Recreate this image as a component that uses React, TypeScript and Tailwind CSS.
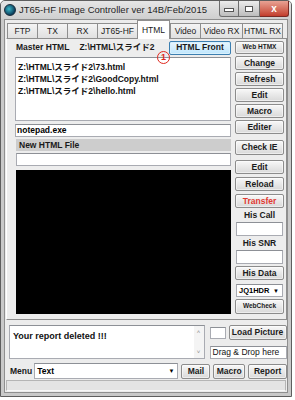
import React from "react";

const btn =
  "flex items-center justify-center border border-[#8c8c8c] rounded-[2px] bg-linear-to-b from-[#f8f8f8] to-[#d9d9d9] font-bold text-[#1c1c1c] leading-none shadow-[inset_0_0_0_1px_#ffffff80]";
const box = "bg-white border border-[#a9abb2] border-t-[#8d9096]";

function Tab({ label, w }: { label: string; w: string }) {
  return (
    <div
      className={`${w} h-[15px] flex items-center justify-center border border-[#8e8e8e] border-b-0 border-r-0 bg-linear-to-b from-[#f4f4f4] to-[#e0e0e0] text-[8.5px] text-[#1a1a1a] leading-none`}
    >
      {label}
    </div>
  );
}

export default function App() {
  return (
    <div className="w-[295px] h-[400px] bg-white overflow-hidden font-['Liberation_Sans','Noto_Sans_CJK_JP',sans-serif]">
      <div className="w-[292px] h-[397px] border border-[#5e5e5e] rounded-t-[5px] bg-[#c9c9c9] flex flex-col px-[3px] pb-[3px]">
        {/* title bar */}
        <div className="h-[18px] flex items-start -mx-[3px] bg-linear-to-b from-[#e6e6e6] to-[#cfcfcf] rounded-t-[4px]">
          <div className="mt-[3px] ml-[3px] w-[12px] h-[12px] rounded-full bg-[radial-gradient(circle_at_40%_40%,#3bb8c8,#0b3e5c_70%)] border border-[#1b2c3a]" />
          <div className="ml-[3px] mt-[4px] text-[9.5px] leading-none text-[#1f1f1f] whitespace-nowrap">
            JT65-HF Image Controller ver 14B/Feb/2015
          </div>
          <div className="ml-auto mr-[2px] flex">
            <div className="w-[20px] h-[16px] border border-[#6d6d6d] border-t-0 rounded-bl-[3px] bg-linear-to-b from-[#ececec] to-[#bdbdbd] flex items-end justify-center pb-[4px]">
              <div className="w-[8px] h-[2px] bg-white border border-[#555] box-content" />
            </div>
            <div className="w-[21px] h-[16px] border border-[#6d6d6d] border-t-0 border-l-0 bg-linear-to-b from-[#ececec] to-[#bdbdbd] flex items-center justify-center">
              <div className="w-[8px] h-[6px] border-[1.5px] border-[#555] bg-white" />
            </div>
            <div className="w-[29px] h-[16px] border border-[#7a2a24] border-t-0 border-l-0 rounded-br-[3px] bg-linear-to-b from-[#e8a294] to-[#c23c2c] flex items-center justify-center text-white font-bold text-[10px] leading-none">
              x
            </div>
          </div>
        </div>

        {/* client */}
        <div className="flex-1 bg-[#ececec] border border-[#8f8f8f] flex flex-col">
          {/* tabs */}
          <div className="h-[18px] flex items-end ml-[2px]">
            <Tab label="FTP" w="w-[30px]" />
            <Tab label="TX" w="w-[30px]" />
            <Tab label="RX" w="w-[30px]" />
            <Tab label="JT65-HF" w="w-[40px]" />
            <div className="w-[33px] h-[19px] -mb-[1px] relative z-10 flex items-center justify-center border border-[#8e8e8e] border-b-0 bg-white text-[8.5px] leading-none text-[#1a1a1a]">
              HTML
            </div>
            <Tab label="Video" w="w-[30px]" />
            <Tab label="Video RX" w="w-[42px]" />
            <div className="w-[41px] h-[15px] flex items-center justify-center border border-[#8e8e8e] border-b-0 bg-linear-to-b from-[#f4f4f4] to-[#e0e0e0] text-[8.5px] text-[#1a1a1a] leading-none">
              HTML RX
            </div>
          </div>

          {/* tab panel */}
          <div className="ml-[1px] w-[281px] h-[282px] border border-[#8e8e8e] border-l-white bg-[#ededed] flex pl-[8px] relative">
            {/* left column */}
            <div className="w-[216px] flex flex-col">
              <div className="h-[16px] flex items-center text-[8.5px] font-bold leading-none text-[#1a1a1a]">
                <span className="ml-[1px]">Master HTML</span>
                <span className="ml-[10px]">Z:\HTML\スライド2</span>
                <div className="ml-auto mt-[1px] w-[62px] h-[14px] flex items-center justify-center border border-[#3c7fb1] rounded-[2px] bg-linear-to-b from-[#eaf6fd] to-[#bee6fd] shadow-[inset_0_0_0_1px_#d8f0fc] font-bold text-[8.5px]">
                  HTML Front
                </div>
              </div>
              <div className={`${box} mt-[2px] h-[64px] pt-[3px] pl-[2px] text-[8.5px] font-bold leading-[12px] text-[#111]`}>
                <div>Z:\HTML\スライド2\73.html</div>
                <div>Z:\HTML\スライド2\GoodCopy.html</div>
                <div>Z:\HTML\スライド2\hello.html</div>
              </div>
              <div className={`${box} mt-[3px] h-[13px] pl-[1px] flex items-center text-[8.5px] font-bold leading-none`}>
                notepad.exe
              </div>
              <div className="mt-[2px] ml-[1px] h-[12px] bg-[#cdcdcd] pl-[3px] flex items-center text-[8.5px] font-bold leading-none text-[#1a1a1a]">
                New HTML File
              </div>
              <div className={`${box} mt-[2px] ml-[1px] h-[13px]`} />
              <div className="mt-[4px] ml-[1px] h-[144px] bg-black" />
            </div>

            {/* right column */}
            <div className="ml-[4px] w-[49px] flex flex-col">
              <div className={`${btn} mt-[2px] h-[13px] text-[6.5px]`}>Web HTMX</div>
              <div className={`${btn} mt-[2px] h-[14px] text-[8.5px]`}>Change</div>
              <div className={`${btn} mt-[2px] h-[14px] text-[8.5px]`}>Refresh</div>
              <div className={`${btn} mt-[2px] h-[14px] text-[8.5px]`}>Edit</div>
              <div className={`${btn} mt-[2px] h-[14px] text-[8.5px]`}>Macro</div>
              <div className={`${btn} mt-[2px] h-[14px] text-[8.5px]`}>Editer</div>
              <div className={`${btn} mt-[6px] h-[15px] text-[8.5px]`}>Check IE</div>
              <div className={`${btn} mt-[5px] h-[14px] text-[8.5px]`}>Edit</div>
              <div className={`${btn} mt-[3px] h-[14px] text-[8.5px]`}>Reload</div>
              <div className={`${btn} mt-[3px] h-[14px] text-[8.5px] text-[#e03a32]`}>Transfer</div>
              <div className="h-[14px] flex items-center justify-center text-[8.5px] font-bold leading-none text-[#1a1a1a]">His Call</div>
              <div className={`${box} mx-[1px] h-[14px]`} />
              <div className="h-[14px] flex items-center justify-center text-[8.5px] font-bold leading-none text-[#1a1a1a]">His SNR</div>
              <div className={`${box} mx-[1px] h-[14px]`} />
              <div className={`${btn} mt-[2px] h-[14px] text-[8.5px]`}>His Data</div>
              <div className={`${box} mt-[4px] mx-[1px] h-[13px] flex items-center pl-[2px] text-[7.5px] font-bold leading-none`}>
                JQ1HDR
                <span className="ml-auto mr-[3px] text-[6px]">▼</span>
              </div>
              <div className={`${btn} mt-[2px] h-[15px] text-[6.5px]`}>WebCheck</div>
            </div>

            {/* annotation */}
            <div className="absolute left-[150px] top-[12px] w-[13px] h-[13px] rounded-full border-[1.5px] border-[#e0281e] flex items-center justify-center text-[#e0281e] text-[9px] font-bold leading-none">
              1
            </div>
          </div>

          {/* bottom area */}
          <div className="mt-[5px] ml-[4px] flex">
            <div className={`${box} w-[197px] h-[34px] flex`}>
              <div className="flex-1 pt-[6px] pl-[3px] text-[9px] font-bold leading-none text-[#111]">
                Your report deleted !!!
              </div>
              <div className="w-[10px] bg-[#f4f4f4] flex flex-col items-center justify-between py-[3px] text-[6px] leading-none text-[#888]">
                <span>˄</span>
                <span>˅</span>
              </div>
            </div>
            <div className="ml-[5px] w-[78px] flex flex-col">
              <div className="flex items-start">
                <div className={`${box} mt-[2px] w-[16px] h-[12px]`} />
                <div className={`${btn} ml-[3px] w-[58px] h-[15px] text-[8.5px]`}>Load Picture</div>
              </div>
              <div className={`${box} mt-[6px] h-[13px] flex items-center pl-[2px] text-[8.5px] leading-none text-[#111]`}>
                Drag &amp; Drop here
              </div>
            </div>
          </div>
          <div className="mt-[4px] ml-[5px] flex items-center">
            <span className="text-[8.5px] font-bold leading-none text-[#1a1a1a]">Menu</span>
            <div className={`${box} ml-[2px] w-[145px] h-[16px] flex items-center pl-[2px] text-[8.5px] font-bold leading-none`}>
              Text
              <span className="ml-auto mr-[3px] text-[6px]">▼</span>
            </div>
            <div className={`${btn} ml-[3px] w-[29px] h-[15px] text-[8.5px]`}>Mail</div>
            <div className={`${btn} ml-[3px] w-[32px] h-[15px] text-[8.5px]`}>Macro</div>
            <div className={`${btn} ml-[3px] w-[39px] h-[15px] text-[8.5px]`}>Report</div>
          </div>
          <div className="mt-auto h-[11px] mx-[1px] mb-[1px] border border-[#b5b5b5] border-b-[#f8f8f8] bg-[#e4e4e4]" />
        </div>
      </div>
    </div>
  );
}
